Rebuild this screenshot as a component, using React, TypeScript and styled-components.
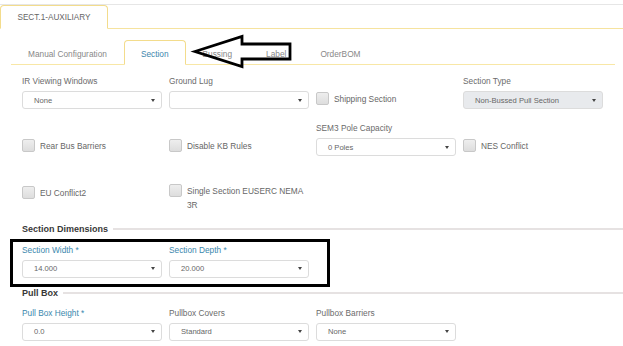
import styled, { createGlobalStyle } from 'styled-components'

const GlobalStyle = createGlobalStyle`
  html, body {
    margin: 0;
    padding: 0;
    background: #fff;
  }
  body {
    font-family: "Liberation Sans", Arial, sans-serif;
  }
`

const Page = styled.div`
  position: relative;
  width: 623px;
  height: 346px;
  overflow: hidden;
  padding-top: 4px;
  box-sizing: border-box;
  font-size: 8.3px;
  color: #666;
`

const TopBar = styled.div`
  display: flex;
  border-top: 1px solid #e6e6e6;
  border-bottom: 1px solid #f6e39e;
`

const TopTab = styled.div`
  width: 108px;
  height: 24px;
  box-sizing: border-box;
  margin-bottom: -1px;
  border: 1px solid #f3dc8c;
  border-bottom-color: #fff;
  border-radius: 4px 4px 0 0;
  display: flex;
  align-items: center;
  justify-content: center;
  color: #666;
  font-size: 8.2px;
`

const SubTabs = styled.div`
  display: flex;
  margin: 11px 8px 0 11px;
  border-bottom: 1px solid #f8e7a6;
`

const SubTab = styled.div<{ $active?: boolean }>`
  height: 25px;
  box-sizing: border-box;
  margin-bottom: -1px;
  padding: 2px 16px 0;
  display: flex;
  align-items: center;
  border: 1px solid ${p => (p.$active ? '#f3dc8c' : 'transparent')};
  border-bottom-color: ${p => (p.$active ? '#fff' : 'transparent')};
  border-radius: 4px 4px 0 0;
  color: ${p => (p.$active ? '#3d86ac' : '#888')};
`

const Arrow = styled.svg`
  position: absolute;
  left: 190px;
  top: 33px;
`

const Content = styled.div`
  padding: 11px 0 0 22px;
`

const Grid = styled.div<{ $cols?: number }>`
  display: grid;
  grid-template-columns: repeat(${p => p.$cols ?? 4}, 140px);
  column-gap: 7px;
  row-gap: 14px;
  width: max-content;
`

const Annotated = styled(Grid)`
  position: relative;
  &::after {
    content: '';
    position: absolute;
    top: -6px;
    left: -12px;
    right: -21px;
    bottom: -9px;
    border: 3px solid #000;
  }
`

const Field = styled.div`
  display: flex;
  flex-direction: column;
`

const Label = styled.div<{ $accent?: boolean }>`
  min-height: 11px;
  line-height: 11px;
  margin-bottom: 4px;
  color: ${p => (p.$accent ? '#3a87ad' : '#6b6b6b')};
  white-space: nowrap;
`

const Select = styled.div<{ $disabled?: boolean }>`
  height: 18px;
  box-sizing: border-box;
  border: 1px solid #dcdcdc;
  border-radius: 3px;
  padding: 0 6px 0 11px;
  display: flex;
  align-items: center;
  background: ${p => (p.$disabled ? '#e8eaed' : '#fff')};
  color: #666;
  font-size: 7.6px;
`

const Caret = styled.span`
  margin-left: auto;
  width: 0;
  height: 0;
  border-left: 2px solid transparent;
  border-right: 2px solid transparent;
  border-top: 3.5px solid #444;
`

const Check = styled.div<{ $raised?: boolean }>`
  display: flex;
  align-items: flex-start;
  gap: 5px;
  padding-top: 1px;
  margin-top: ${p => (p.$raised ? '-2px' : '0')};
`

const Box = styled.span`
  width: 13px;
  height: 13px;
  flex-shrink: 0;
  box-sizing: border-box;
  border: 1px solid #c8c8c8;
  border-radius: 2px;
  background: linear-gradient(#eeeeee, #dddddd);
`

const CheckText = styled.span`
  line-height: 14px;
  margin-top: -0.5px;
  color: #666;
`

const Heading = styled.div<{ $gap: number; $after: number }>`
  display: flex;
  align-items: center;
  margin: ${p => p.$gap}px 0 ${p => p.$after}px;
  font-size: 9px;
  line-height: 11px;
  font-weight: bold;
  color: #383838;
  &::after {
    content: '';
    flex: 1;
    height: 2px;
    margin-left: 5px;
    background: #e6e2e2;
  }
`

function Dropdown({ label, value, accent, disabled }: { label: string; value: string; accent?: boolean; disabled?: boolean }) {
  return (
    <Field>
      <Label $accent={accent}>{label}</Label>
      <Select $disabled={disabled}>
        <span>{value}</span>
        <Caret />
      </Select>
    </Field>
  )
}

function CheckField({ text, raised }: { text: string; raised?: boolean }) {
  return (
    <Field>
      <Label />
      <Check $raised={raised}>
        <Box />
        <CheckText>{text}</CheckText>
      </Check>
    </Field>
  )
}

export default function App() {
  return (
    <Page>
      <GlobalStyle />
      <TopBar>
        <TopTab>SECT.1-AUXILIARY</TopTab>
      </TopBar>
      <SubTabs>
        <SubTab>Manual Configuration</SubTab>
        <SubTab $active>Section</SubTab>
        <SubTab>Bussing</SubTab>
        <SubTab>Label</SubTab>
        <SubTab>OrderBOM</SubTab>
      </SubTabs>
      <Arrow width="104" height="38" viewBox="0 0 104 38">
        <polygon
          points="5,18.5 52,3.5 52,11 100,11 100,26 52,26 52,33.5"
          fill="none"
          stroke="#000"
          strokeWidth="2.8"
        />
      </Arrow>
      <Content>
        <Grid>
          <Dropdown label="IR Viewing Windows" value="None" />
          <Dropdown label="Ground Lug" value="" />
          <CheckField text="Shipping Section" />
          <Dropdown label="Section Type" value="Non-Bussed Pull Section" disabled />

          <CheckField text="Rear Bus Barriers" />
          <CheckField text="Disable KB Rules" />
          <Dropdown label="SEM3 Pole Capacity" value="0 Poles" />
          <CheckField text="NES Conflict" />

          <CheckField text="EU Conflict2" />
          <CheckField text="Single Section EUSERC NEMA 3R" raised />
        </Grid>

        <Heading $gap={12} $after={10}>Section Dimensions</Heading>
        <Annotated $cols={2}>
          <Dropdown label="Section Width *" value="14.000" accent />
          <Dropdown label="Section Depth *" value="20.000" accent />
        </Annotated>

        <Heading $gap={10} $after={9}>Pull Box</Heading>
        <Grid $cols={3}>
          <Dropdown label="Pull Box Height *" value="0.0" accent />
          <Dropdown label="Pullbox Covers" value="Standard" />
          <Dropdown label="Pullbox Barriers" value="None" />
        </Grid>
      </Content>
    </Page>
  )
}
